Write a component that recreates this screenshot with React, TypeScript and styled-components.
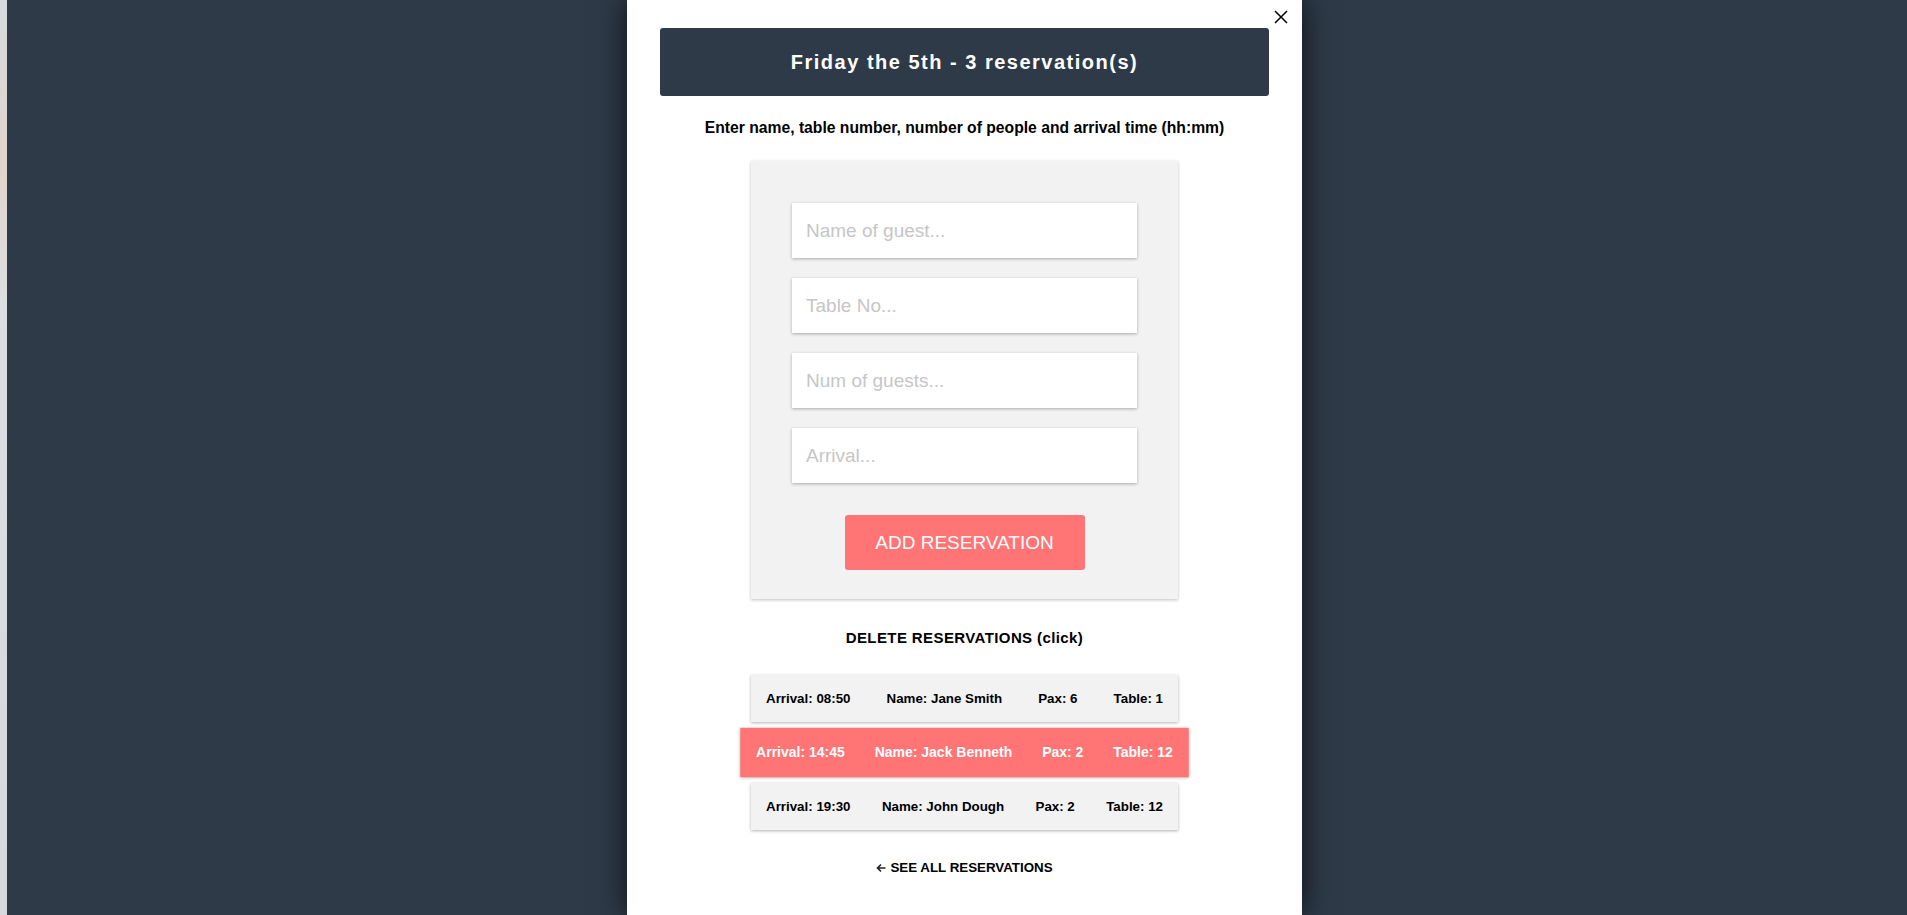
import styled, { createGlobalStyle } from "styled-components";

const GlobalStyle = createGlobalStyle`
  html, body {
    margin: 0;
    padding: 0;
    height: 100%;
    overflow: hidden;
  }
  body {
    font-family: "Liberation Sans", Arial, sans-serif;
    background: #2e3a48;
  }
  #root {
    height: 100%;
  }
`;

const Page = styled.div`
  display: flex;
  height: 100vh;
`;

const PageEdge = styled.div`
  width: 7px;
  flex-shrink: 0;
  background: linear-gradient(
    180deg,
    #d6dade 0%,
    #e2d4ca 18%,
    #dcdfe2 34%,
    #d5d9dd 100%
  );
`;

const Backdrop = styled.div`
  flex: 1;
  display: flex;
  justify-content: center;
  padding-left: 15px;
  background: #2e3a48;
`;

const Modal = styled.div`
  position: relative;
  width: 675px;
  min-height: 100%;
  box-sizing: border-box;
  padding: 28px 33px;
  background: #fff;
  box-shadow: 0 0 28px rgba(0, 0, 0, 0.75);
  display: flex;
  flex-direction: column;
  align-items: center;
`;

const CloseButton = styled.button`
  position: absolute;
  top: 9px;
  right: 13px;
  width: 16px;
  height: 16px;
  padding: 0;
  border: none;
  background: none;
  cursor: pointer;
  display: flex;
  align-items: center;
  justify-content: center;
`;

const TitleBar = styled.h1`
  margin: 0;
  width: 100%;
  height: 68px;
  border-radius: 3px;
  background: #2e3a48;
  color: #fff;
  font-size: 20px;
  font-weight: bold;
  letter-spacing: 1.5px;
  display: flex;
  align-items: center;
  justify-content: center;
`;

const Instructions = styled.p`
  margin: 23px 0 0;
  font-size: 15.7px;
  font-weight: bold;
  color: #000;
`;

const FormPanel = styled.form`
  margin-top: 24px;
  width: 427px;
  box-sizing: border-box;
  padding: 42px 41px 29px;
  background: #f2f2f2;
  box-shadow: 0 1px 3px rgba(0, 0, 0, 0.25);
  display: flex;
  flex-direction: column;
  gap: 20px;
`;

const Field = styled.input`
  height: 55px;
  box-sizing: border-box;
  padding: 0 14px;
  border: none;
  outline: none;
  background: #fff;
  box-shadow: 0 1px 3px rgba(0, 0, 0, 0.3);
  font-family: "Liberation Sans", Arial, sans-serif;
  font-size: 19px;
  color: #333;

  &::placeholder {
    color: #c6c6c6;
  }
`;

const AddButton = styled.button`
  margin-top: 12px;
  align-self: center;
  width: 240px;
  height: 55px;
  border: none;
  border-radius: 3px;
  background: #ff7474;
  color: #fff;
  font-family: "Liberation Sans", Arial, sans-serif;
  font-size: 19px;
  cursor: pointer;
`;

const SectionHeading = styled.h2`
  margin: 30px 0 0;
  font-size: 15px;
  font-weight: bold;
  letter-spacing: 0.4px;
  color: #000;
`;

const RowList = styled.div`
  margin-top: 29px;
  width: 427px;
  display: flex;
  flex-direction: column;
  gap: 7px;
`;

const Row = styled.div<{ $active?: boolean }>`
  display: flex;
  justify-content: space-between;
  padding: 16px 15px;
  background: ${(p) => (p.$active ? "#ff7474" : "#f2f2f2")};
  color: ${(p) => (p.$active ? "#fff" : "#000")};
  box-shadow: 0 1px 3px rgba(0, 0, 0, 0.3);
  font-size: 13.33px;
  font-weight: bold;
  line-height: 15px;
  transform: ${(p) => (p.$active ? "scale(1.05)" : "none")};
  cursor: pointer;
`;

const SeeAll = styled.a`
  margin-top: 30px;
  display: flex;
  align-items: center;
  gap: 4px;
  font-size: 13.33px;
  font-weight: bold;
  color: #000;
  text-decoration: none;
  cursor: pointer;
`;

const reservations = [
  { arrival: "08:50", name: "Jane Smith", pax: 6, table: 1 },
  { arrival: "14:45", name: "Jack Benneth", pax: 2, table: 12 },
  { arrival: "19:30", name: "John Dough", pax: 2, table: 12 },
];

const App: React.FC = () => {
  return (
    <>
      <GlobalStyle />
      <Page>
        <PageEdge />
        <Backdrop>
          <Modal>
            <CloseButton aria-label="Close">
              <svg width="14" height="14" viewBox="0 0 14 14">
                <path
                  d="M1 1L13 13M13 1L1 13"
                  stroke="#000"
                  strokeWidth="1.5"
                />
              </svg>
            </CloseButton>
            <TitleBar>Friday the 5th - 3 reservation(s)</TitleBar>
            <Instructions>
              Enter name, table number, number of people and arrival time
              (hh:mm)
            </Instructions>
            <FormPanel onSubmit={(e) => e.preventDefault()}>
              <Field placeholder="Name of guest..." />
              <Field placeholder="Table No..." />
              <Field placeholder="Num of guests..." />
              <Field placeholder="Arrival..." />
              <AddButton type="submit">ADD RESERVATION</AddButton>
            </FormPanel>
            <SectionHeading>DELETE RESERVATIONS (click)</SectionHeading>
            <RowList>
              {reservations.map((r, i) => (
                <Row key={r.arrival} $active={i === 1}>
                  <span>Arrival: {r.arrival}</span>
                  <span>Name: {r.name}</span>
                  <span>Pax: {r.pax}</span>
                  <span>Table: {r.table}</span>
                </Row>
              ))}
            </RowList>
            <SeeAll>
              <svg width="10" height="10" viewBox="0 0 10 10">
                <path
                  d="M9.5 5H1.5M5 1.5L1.5 5L5 8.5"
                  stroke="#222"
                  strokeWidth="1.6"
                  fill="none"
                />
              </svg>
              SEE ALL RESERVATIONS
            </SeeAll>
          </Modal>
        </Backdrop>
      </Page>
    </>
  );
};

export default App;
